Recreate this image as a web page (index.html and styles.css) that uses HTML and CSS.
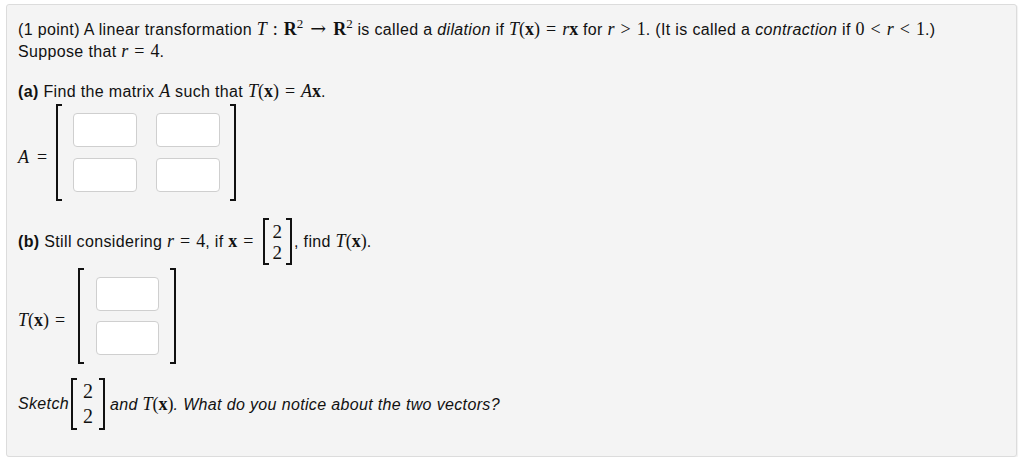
FILE: index.html
```html
<!DOCTYPE html>
<html>
<head>
<meta charset="utf-8">
<link rel="stylesheet" href="styles.css">
</head>
<body>
<div class="problem">
  <p class="intro">(1 point) A linear transformation <span class="m"><i>T</i><span class="rel">:</span><b>R</b><sup class="sup">2</sup><span class="rel arrow">→</span><b>R</b><sup class="sup">2</sup></span> is called a <em>dilation</em> if <span class="m"><i>T</i>(<b>x</b>)<span class="rel">=</span><i>r</i><b>x</b></span> for <span class="m"><i>r</i><span class="rel">&gt;</span>1</span>. (It is called a <em>contraction</em> if <span class="m">0<span class="rel">&lt;</span><i>r</i><span class="rel">&lt;</span>1</span>.)<br>Suppose that <span class="m"><i>r</i><span class="rel">=</span>4</span>.</p>

  <p class="part-a"><b>(a)</b> Find the matrix <span class="m"><i>A</i></span> such that <span class="m"><i>T</i>(<b>x</b>)<span class="rel">=</span><i>A</i><b>x</b></span>.</p>

  <div class="eqrow row-a">
    <span class="m label label-a"><i>A</i><span class="rel tail">=</span></span>
    <div class="matrix mat-a">
      <span class="brk l"></span>
      <div class="cells grid2">
        <span class="cell"></span><span class="cell"></span>
        <span class="cell"></span><span class="cell"></span>
      </div>
      <span class="brk r"></span>
    </div>
  </div>

  <div class="line-b">
    <span><b>(b)</b> Still considering <span class="m"><i>r</i><span class="rel">=</span>4</span>, if <span class="m"><b>x</b><span class="rel tail">=</span></span></span>
    <span class="vec vec-b"><span class="brk l"></span><span class="nums m"><span>2</span><span>2</span></span><span class="brk r"></span></span>
    <span>, find <span class="m"><i>T</i>(<b>x</b>)</span>.</span>
  </div>

  <div class="eqrow row-b">
    <span class="m label label-b"><i>T</i>(<b>x</b>)<span class="rel tail">=</span></span>
    <div class="matrix mat-b">
      <span class="brk l"></span>
      <div class="cells grid1">
        <span class="cell"></span>
        <span class="cell"></span>
      </div>
      <span class="brk r"></span>
    </div>
  </div>

  <div class="line-s">
    <em>Sketch</em>
    <span class="vec vec-s"><span class="brk l"></span><span class="nums m"><span>2</span><span>2</span></span><span class="brk r"></span></span>
    <span><em>and</em> <span class="m"><i>T</i>(<b>x</b>)</span><em>. What do you notice about the two vectors?</em></span>
  </div>
</div>
</body>
</html>
```
FILE: styles.css
```css
html, body {
  margin: 0;
  padding: 0;
  background: #fff;
}
body {
  font-family: "Liberation Sans", Arial, sans-serif;
  font-size: 16px;
  letter-spacing: 0.35px;
  color: #111;
}
.problem {
  margin: 4px 7px 0 6px;
  width: 1011px;
  height: 453px;
  box-sizing: border-box;
  background: #f4f4f4;
  border: 1px solid #dcdcdc;
  border-radius: 3px;
  box-shadow: 1px 1px 1px rgba(0,0,0,0.06);
  padding: 14px 11px 0 11px;
}
p { margin: 0; }
.intro { line-height: 22px; }
.m {
  font-family: "Liberation Serif", "Times New Roman", serif;
  font-size: 18px;
  line-height: 1;
  letter-spacing: 0;
  white-space: nowrap;
}
.m i { font-style: italic; }
.m b { font-weight: bold; }
.rel { margin: 0 6px; }
.rel.tail { margin-right: 0; }
.arrow {
  font-family: "DejaVu Serif", serif;
  font-size: 19px;
  font-weight: 300;
  margin: 0 7px;
}
.sup {
  font-size: 13px;
  vertical-align: 7px;
  line-height: 0;
}
.part-a {
  margin-top: 18px;
  line-height: 22px;
}
.eqrow {
  display: flex;
  align-items: center;
}
.row-a { margin-top: 1px; }
.label { white-space: pre; }
.label-a { width: 38px; padding-top: 8px; }
.label-a .rel { margin-left: 8px; }
.label-b { width: 60px; padding-top: 8px; }
.matrix {
  display: flex;
  align-items: stretch;
}
.brk {
  width: 4px;
  border: 2px solid #111;
  border-right: none;
  flex: none;
}
.brk.r {
  border-left: none;
  border-right: 2px solid #111;
}
.cells {
  display: grid;
  padding: 9px 0;
}
.grid2 {
  grid-template-columns: 64px 64px;
  column-gap: 19px;
  row-gap: 11px;
  padding-left: 11px;
  padding-right: 10px;
}
.grid1 {
  grid-template-columns: 63px;
  row-gap: 10px;
  padding-left: 12px;
  padding-right: 11px;
}
.cell {
  display: block;
  height: 34px;
  box-sizing: border-box;
  background: #fff;
  border: 1px solid #cfcfcf;
  border-radius: 4px;
}
.line-b {
  display: flex;
  align-items: center;
  margin-top: 17px;
  height: 47px;
  white-space: pre;
}
.vec {
  display: inline-flex;
  align-items: stretch;
  margin: 0 2px 0 9px;
}
.vec-b { height: 47px; }
.nums {
  display: flex;
  flex-direction: column;
  justify-content: center;
  line-height: 21px;
  font-size: 19px;
  padding: 0 4px;
}
.row-b { margin-top: 3px; }
.line-s {
  display: flex;
  align-items: center;
  margin-top: 14px;
  height: 52px;
  white-space: pre;
}
.vec-s { height: 52px; margin-left: 2px; margin-right: 5px; }
.vec-s .nums { line-height: 25px; font-size: 20px; padding: 0 6px; }
```
